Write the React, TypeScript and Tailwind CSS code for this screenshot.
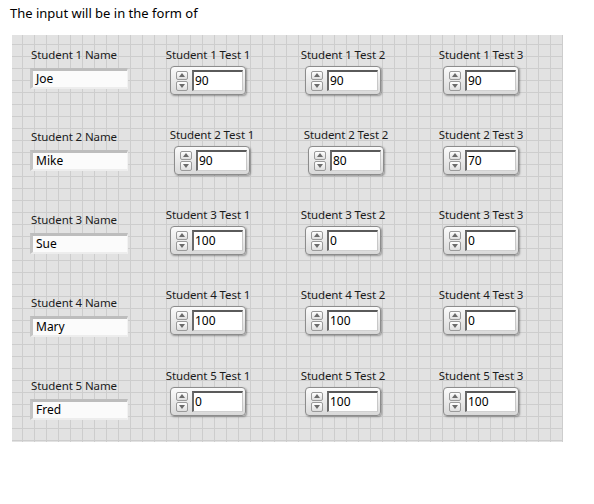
import React from 'react';

// Panel origin on the page: x 12, y 35
const PX = 12;
const PY = 35;

interface NameCtl {
  label: string;
  value: string;
  top: number;
}

interface NumCtl {
  label: string;
  value: string;
  left: number;
  top: number;
}

const names: NameCtl[] = [
  { label: 'Student 1 Name', value: 'Joe', top: 48 },
  { label: 'Student 2 Name', value: 'Mike', top: 130 },
  { label: 'Student 3 Name', value: 'Sue', top: 213 },
  { label: 'Student 4 Name', value: 'Mary', top: 296 },
  { label: 'Student 5 Name', value: 'Fred', top: 379 },
];

const tests: NumCtl[] = [
  { label: 'Student 1 Test 1', value: '90', left: 170, top: 48 },
  { label: 'Student 1 Test 2', value: '90', left: 305, top: 48 },
  { label: 'Student 1 Test 3', value: '90', left: 443, top: 48 },
  { label: 'Student 2 Test 1', value: '90', left: 174, top: 128 },
  { label: 'Student 2 Test 2', value: '80', left: 308, top: 128 },
  { label: 'Student 2 Test 3', value: '70', left: 443, top: 128 },
  { label: 'Student 3 Test 1', value: '100', left: 170, top: 208 },
  { label: 'Student 3 Test 2', value: '0', left: 305, top: 208 },
  { label: 'Student 3 Test 3', value: '0', left: 443, top: 208 },
  { label: 'Student 4 Test 1', value: '100', left: 170, top: 288 },
  { label: 'Student 4 Test 2', value: '100', left: 305, top: 288 },
  { label: 'Student 4 Test 3', value: '0', left: 443, top: 288 },
  { label: 'Student 5 Test 1', value: '0', left: 170, top: 369 },
  { label: 'Student 5 Test 2', value: '100', left: 305, top: 369 },
  { label: 'Student 5 Test 3', value: '100', left: 443, top: 369 },
];

function StringControl({ label, value, top }: NameCtl) {
  return (
    <div className="absolute flex flex-col" style={{ left: 30 - PX, top: top - PY }}>
      <span className="h-[14px] pl-[1px] text-[11.5px] leading-[14px] tracking-[-0.1px] text-[#1b1b1b]">{label}</span>
      <div className="mt-[6px] flex h-[21px] w-[98px] items-center border-t-[3px] border-l-[3px] border-r border-b-2 border-t-[#bdbdbd] border-l-[#c4c4c4] border-r-[#f2f2f2] border-b-[#ededed] bg-[#fbfbfb] pl-[3px] text-[12px] text-black">
        {value}
      </div>
    </div>
  );
}

function Spin() {
  return (
    <div className="flex h-[20px] w-[12px] flex-col gap-[1px]">
      <div className="flex flex-1 items-center justify-center rounded-[2px] border border-[#9a9a9a] bg-gradient-to-b from-white to-[#dedede]">
        <svg width="6" height="4" viewBox="0 0 6 4">
          <path d="M0 4 L3 0 L6 4 Z" fill="#6b6b6b" />
        </svg>
      </div>
      <div className="flex flex-1 items-center justify-center rounded-[2px] border border-[#9a9a9a] bg-gradient-to-b from-white to-[#dedede]">
        <svg width="6" height="4" viewBox="0 0 6 4">
          <path d="M0 0 L6 0 L3 4 Z" fill="#6b6b6b" />
        </svg>
      </div>
    </div>
  );
}

function NumericControl({ label, value, left, top }: NumCtl) {
  return (
    <div className="absolute flex w-[76px] flex-col items-center" style={{ left: left - PX, top: top - PY }}>
      <span className="h-[14px] whitespace-nowrap text-[11.5px] leading-[14px] tracking-[-0.1px] text-[#1b1b1b]">{label}</span>
      <div className="mt-[4px] flex h-[29px] w-[76px] items-center gap-[4px] rounded-[4px] border border-[#8c8c8c] bg-gradient-to-b from-[#fbfbfb] to-[#d9d9d9] pl-[5px] shadow-[1px_1px_2px_rgba(0,0,0,0.35)]">
        <Spin />
        <div className="flex h-[21px] w-[51px] items-center border-t-2 border-l-2 border-r border-b border-t-[#5a5a5a] border-l-[#6a6a6a] border-r-[#c8c8c8] border-b-[#d0d0d0] bg-white pl-[1px] text-[12px] text-black">
          {value}
        </div>
      </div>
    </div>
  );
}

export default function App() {
  return (
    <div className="h-[504px] w-[594px] bg-white font-['Noto_Sans',sans-serif]">
      <p className="pl-[10px] pt-[4px] text-[13px] leading-[18px] text-black">The input will be in the form of</p>

      {/* front panel */}
      <div className="relative ml-[12px] mt-[13px] h-[407px] w-[551px] bg-[#e2e2e2] bg-[linear-gradient(to_right,#cdcdcd_1px,transparent_1px),linear-gradient(to_bottom,#cdcdcd_1px,transparent_1px)] bg-[size:12px_12px] bg-[position:10px_9px]">
        {names.map((n) => (
          <StringControl key={n.label} {...n} />
        ))}
        {tests.map((t) => (
          <NumericControl key={t.label} {...t} />
        ))}
      </div>
    </div>
  );
}
